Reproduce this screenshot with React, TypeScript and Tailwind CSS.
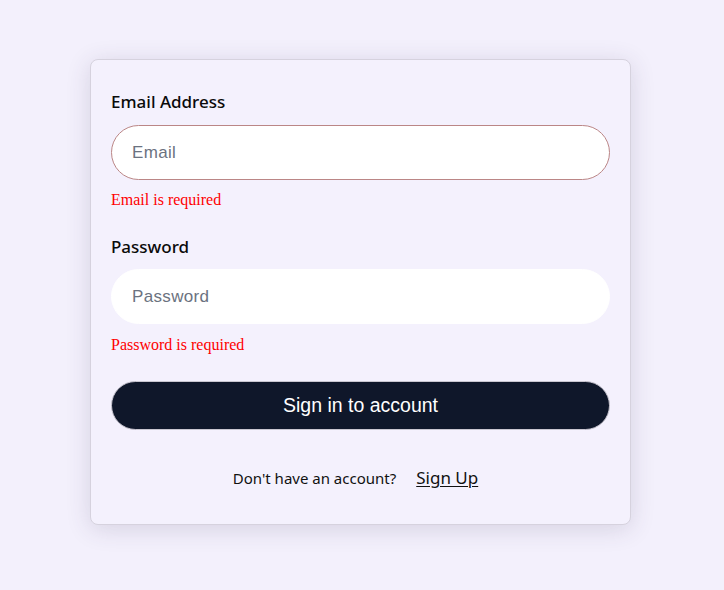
import { useState } from "react";

const LABEL = "font-['Noto_Sans','Open_Sans',sans-serif]";

export default function App() {
  const [email, setEmail] = useState("");
  const [password, setPassword] = useState("");

  return (
    <div className="min-h-screen bg-[#f3f0fc] pt-[59px] pr-[3px]">
      <form
        onSubmit={(e) => e.preventDefault()}
        className="mx-auto w-[541px] rounded-lg border border-[#d6d2de] bg-[#f4f1fd] px-5 pt-[30px] pb-[33px] shadow-[0_4px_24px_rgba(60,50,90,0.16)]"
      >
        {/* Email */}
        <label className={`block text-[17px] leading-6 font-medium text-[#0a0a0a] ${LABEL}`}>
          Email Address
        </label>
        <input
          type="email"
          autoFocus
          value={email}
          onChange={(e) => setEmail(e.target.value)}
          placeholder="Email"
          className="mt-[11px] block h-[55px] w-full rounded-full border border-[#bb8686] bg-white px-5 font-['Liberation_Sans',Arial,sans-serif] text-[17px] tracking-[0.02em] text-[#111] caret-black outline-none placeholder:text-[#6b7280]"
        />
        <p className="mt-[10px] font-['Liberation_Serif','Times_New_Roman',serif] text-[16px] leading-5 text-[#ff0000]">
          Email is required
        </p>

        {/* Password */}
        <label className={`mt-[25px] block text-[17px] leading-6 font-medium text-[#0a0a0a] ${LABEL}`}>
          Password
        </label>
        <input
          type="password"
          value={password}
          onChange={(e) => setPassword(e.target.value)}
          placeholder="Password"
          className="mt-[10px] block h-[55px] w-full rounded-full border border-white bg-white px-5 font-['Liberation_Sans',Arial,sans-serif] text-[17px] tracking-[0.02em] text-[#111] outline-none placeholder:text-[#6b7280]"
        />
        <p className="mt-[11px] font-['Liberation_Serif','Times_New_Roman',serif] text-[16px] leading-5 text-[#ff0000]">
          Password is required
        </p>

        <button
          type="submit"
          className="mt-[26px] block h-[49px] w-full rounded-full border border-[#c9c6d0] bg-[#0f172a] font-['Liberation_Sans',Arial,sans-serif] text-[19.5px] text-white"
        >
          Sign in to account
        </button>

        <div className={`mt-[35px] flex items-center justify-center gap-5 pr-[10px] text-[#111] ${LABEL}`}>
          <span className="text-[15px]">Don't have an account?</span>
          <a href="#" className="text-[17px] leading-[26px] underline underline-offset-2">
            Sign Up
          </a>
        </div>
      </form>
    </div>
  );
}
